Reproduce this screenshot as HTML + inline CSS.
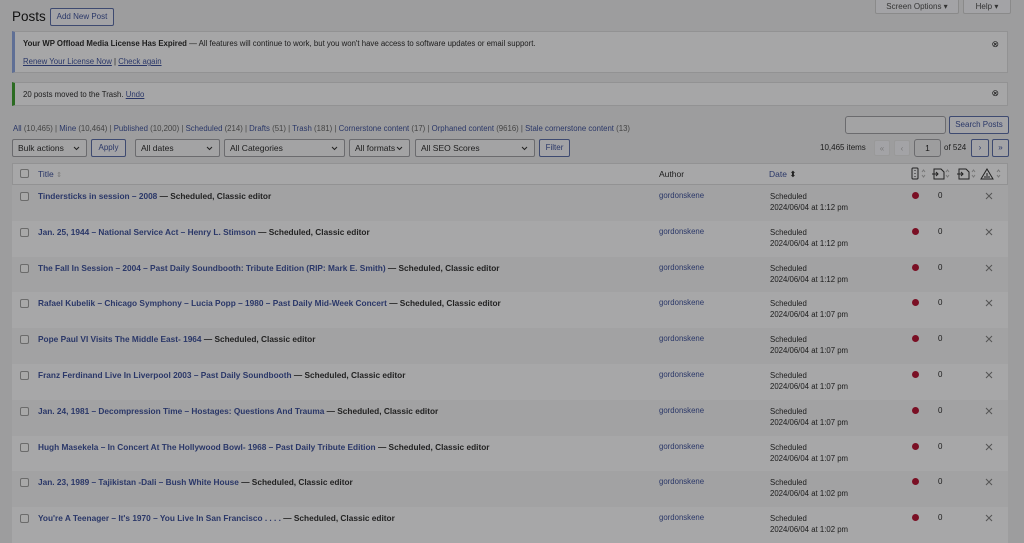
<!DOCTYPE html>
<html><head><meta charset="utf-8"><style>
*{box-sizing:border-box;margin:0;padding:0}
body{width:1024px;height:539px;overflow:hidden;background:#9d9d9e;font-family:"Liberation Sans",sans-serif;font-size:8.5px;color:#1c1c1c;position:relative}
a{color:#2a3768;text-decoration:none}
.abs{position:absolute}
.btn{position:absolute;border:1px solid #3e4a70;border-radius:2px;color:#2a3768;font-size:8px;line-height:16px;text-align:center;background:#a3a3a6}
.sel{position:absolute;border:1px solid #6b6b6e;border-radius:2px;height:18px;line-height:16px;padding-left:5px;font-size:8.5px;background:#a3a3a4}
.sel svg{position:absolute;right:6px;top:6px}
.notice{position:absolute;left:12px;width:996px;background:#a6a6a7;border:1px solid #929293;}
.row{position:absolute;left:12px;width:996px;height:36px;}
.cb{position:absolute;left:8px;width:9px;height:9px;border:1px solid #6b6b6b;border-radius:2px;background:#a8a8a8}
.srt{font-size:7px;color:#777}
</style></head><body>
<div class="abs" style="left:12px;top:9px;font-size:13.5px;color:#111">Posts</div>
<div class="btn" style="left:50px;top:8px;width:64px;height:18px">Add New Post</div>
<div class="btn" style="left:875px;top:-4px;width:84px;height:18px;border-color:#8a8a8a;color:#333;padding-top:2px">Screen Options ▾</div>
<div class="btn" style="left:963px;top:-4px;width:48px;height:18px;border-color:#8a8a8a;color:#333;padding-top:2px">Help ▾</div>
<div class="notice" style="top:31px;height:42px;border-left:3px solid #5f6f95">
 <div class="abs" style="left:8px;top:7px;font-size:7.8px"><b>Your WP Offload Media License Has Expired</b> — All features will continue to work, but you won't have access to software updates or email support.</div>
 <div class="abs" style="left:8px;top:25px;font-size:7.8px"><a style="text-decoration:underline">Renew Your License Now</a> | <a style="text-decoration:underline">Check again</a></div>
 <div class="abs" style="right:8px;top:7px;font-size:9px">⊗</div>
</div>
<div class="notice" style="top:82px;height:24px;border-left:3px solid #2b6b22">
 <div class="abs" style="left:8px;top:7px;font-size:7.8px">20 posts moved to the Trash. <a style="text-decoration:underline">Undo</a></div>
 <div class="abs" style="right:8px;top:5px;font-size:9px">⊗</div>
</div>
<div class="abs" style="left:13px;top:124px;font-size:7.8px;color:#444"><a>All</a> (10,465) | <a>Mine</a> (10,464) | <a>Published</a> (10,200) | <a>Scheduled</a> (214) | <a>Drafts</a> (51) | <a>Trash</a> (181) | <a>Cornerstone content</a> (17) | <a>Orphaned content</a> (9616) | <a>Stale cornerstone content</a> (13)</div>
<div class="abs" style="left:845px;top:116px;width:101px;height:18px;border:1px solid #6b6b6e;border-radius:3px;background:#a3a3a4"></div>
<div class="btn" style="left:949px;top:116px;width:60px;height:18px">Search Posts</div>
<div class="sel" style="left:12px;top:139px;width:75px">Bulk actions<svg width="7" height="5"><path d="M1 1l2.5 2.5L6 1" stroke="#222" fill="none"/></svg></div>
<div class="btn" style="left:91px;top:139px;width:35px;height:18px">Apply</div>
<div class="sel" style="left:135px;top:139px;width:85px">All dates<svg width="7" height="5"><path d="M1 1l2.5 2.5L6 1" stroke="#222" fill="none"/></svg></div>
<div class="sel" style="left:224px;top:139px;width:121px">All Categories<svg width="7" height="5"><path d="M1 1l2.5 2.5L6 1" stroke="#222" fill="none"/></svg></div>
<div class="sel" style="left:349px;top:139px;width:61px">All formats<svg width="7" height="5"><path d="M1 1l2.5 2.5L6 1" stroke="#222" fill="none"/></svg></div>
<div class="sel" style="left:415px;top:139px;width:120px">All SEO Scores<svg width="7" height="5"><path d="M1 1l2.5 2.5L6 1" stroke="#222" fill="none"/></svg></div>
<div class="btn" style="left:539px;top:139px;width:31px;height:18px">Filter</div>
<div class="abs" style="left:820px;top:143px;font-size:8px">10,465 items</div>
<div class="btn" style="left:874px;top:140px;width:16px;height:16px;border-color:#999;color:#777">«</div>
<div class="btn" style="left:894px;top:140px;width:16px;height:16px;border-color:#999;color:#777">‹</div>
<div class="abs" style="left:914px;top:139px;width:27px;height:18px;border:1px solid #6b6b6e;border-radius:3px;text-align:center;line-height:16px">1</div>
<div class="abs" style="left:944px;top:143px;font-size:8px">of 524</div>
<div class="btn" style="left:971px;top:139px;width:18px;height:18px">›</div>
<div class="btn" style="left:992px;top:139px;width:17px;height:18px">»</div>
<div class="abs" style="left:12px;top:163px;width:996px;height:376px;background:#a7a7a8;border:1px solid #929293"></div>
<div class="row" style="top:163px;height:22px;border-bottom:1px solid #929293">
 <div class="cb" style="top:6px"></div>
 <a class="abs" style="left:26px;top:6px">Title <span class="srt">⇕</span></a>
 <div class="abs" style="left:647px;top:6px">Author</div>
 <a class="abs" style="left:757px;top:6px">Date <span style="color:#222">⬍</span></a>
 <svg class="abs" style="left:898px;top:3px" width="100" height="15" fill="none" stroke="#222" stroke-width="1">
  <rect x="2" y="2" width="6" height="11" rx="1"/><path d="M5 4v1M5 7v1M5 10v1"/>
  <path d="M12 6l1.5-2 1.5 2M12 9l1.5 2 1.5-2" stroke="#777"/>
  <path d="M24 3h7l3 3v7h-10zM22 8h6m-2-2l2 2-2 2"/>
  <path d="M36 6l1.5-2 1.5 2M36 9l1.5 2 1.5-2" stroke="#777"/>
  <path d="M49 3h7l3 3v7h-10zM47 8h6m-2-2l2 2-2 2"/>
  <path d="M62 6l1.5-2 1.5 2M62 9l1.5 2 1.5-2" stroke="#777"/>
  <path d="M77 3l6 10h-12zM77 7v3M74 11h6"/>
  <path d="M87 6l1.5-2 1.5 2M87 9l1.5 2 1.5-2" stroke="#777"/>
 </svg>
</div>
<div id="rows"></div>
<script>
var d=[["Tindersticks in session – 2008","1:12"],["Jan. 25, 1944 – National Service Act – Henry L. Stimson","1:12"],["The Fall In Session – 2004 – Past Daily Soundbooth: Tribute Edition (RIP: Mark E. Smith)","1:12"],["Rafael Kubelik – Chicago Symphony – Lucia Popp – 1980 – Past Daily Mid-Week Concert","1:07"],["Pope Paul VI Visits The Middle East- 1964","1:07"],["Franz Ferdinand Live In Liverpool 2003 – Past Daily Soundbooth","1:07"],["Jan. 24, 1981 – Decompression Time – Hostages: Questions And Trauma","1:07"],["Hugh Masekela – In Concert At The Hollywood Bowl- 1968 – Past Daily Tribute Edition","1:07"],["Jan. 23, 1989 – Tajikistan -Dali – Bush White House","1:02"],["You're A Teenager – It's 1970 – You Live In San Francisco . . . .","1:02"]];
var h="";d.forEach(function(r,i){var t=185+i*35.8;h+='<div class="row" style="top:'+t+'px;background:'+(i%2?'#a7a7a8':'#a2a2a3')+'"><div class="cb" style="top:7px"></div><div class="abs" style="left:26px;top:6px;font-size:8.3px"><a style="font-weight:bold;color:#2a3768">'+r[0]+'</a> <b style="color:#222;font-weight:600">— Scheduled, Classic editor</b></div><a class="abs" style="left:647px;top:6px;font-size:7.8px">gordonskene</a><div class="abs" style="left:758px;top:6px;font-size:7.8px;line-height:11px">Scheduled<br>2024/06/04 at '+r[1]+' pm</div><div class="abs" style="left:900px;top:7px;width:7px;height:7px;border-radius:50%;background:#7a0f24"></div><div class="abs" style="left:926px;top:6px;font-size:8px">0</div><svg class="abs" style="left:973px;top:7px" width="8" height="8"><path d="M1 1l6 6M7 1l-6 6" stroke="#555"/></svg></div>'});
document.getElementById("rows").innerHTML=h;
</script>
</body></html>
